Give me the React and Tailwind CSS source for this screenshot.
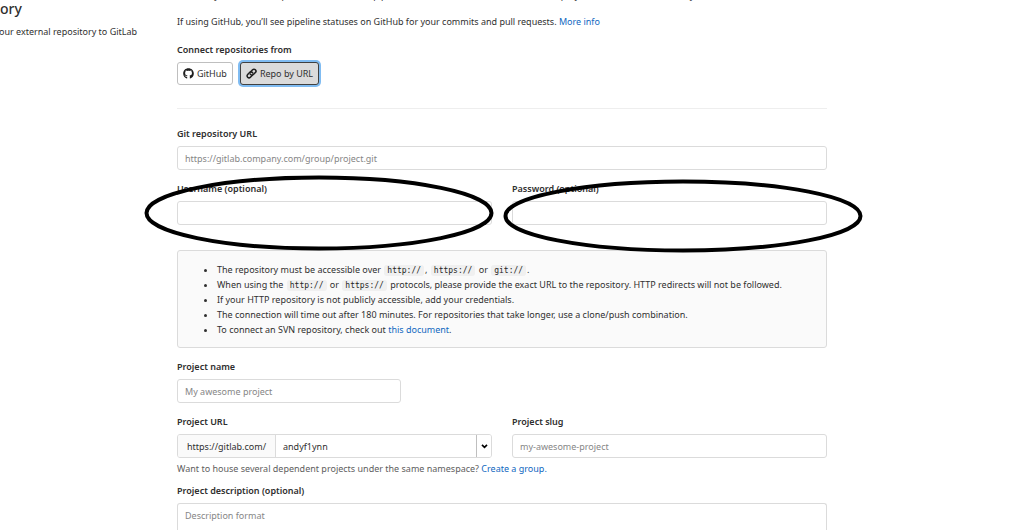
import { FaGithub } from 'react-icons/fa'

const labelClass = 'block font-semibold text-[#2e2e2e]'
const inputClass =
  'block w-full h-6 px-[7px] rounded-[3px] border border-[#dbdbdb] bg-white text-[#303030] placeholder:text-[#868686] outline-none'

function Field({ id, label, className = '', ...props }) {
  return (
    <div className={className}>
      <label htmlFor={id} className={labelClass}>{label}</label>
      <input id={id} className={`${inputClass} mt-[5px]`} {...props} />
    </div>
  )
}

function Code({ children }) {
  return (
    <code className="mx-px px-[3px] py-px rounded-[3px] bg-[#f0f0f0] font-['DejaVu_Sans_Mono',monospace] text-[8px] leading-none text-[#1f1f1f]">
      {children}
    </code>
  )
}

function LinkIcon() {
  return (
    <svg viewBox="0 0 16 16" className="w-[11px] h-[11px]" fill="none" stroke="#1f1f1f" strokeWidth="2.3" strokeLinecap="round" aria-hidden="true">
      <path d="M9.2 10.6 6.4 13.4a2.8 2.8 0 0 1-4-4l2.9-2.9a2.8 2.8 0 0 1 4 0l.5.6" />
      <path d="m6.8 5.4 2.8-2.8a2.8 2.8 0 0 1 4 4l-2.9 2.9a2.8 2.8 0 0 1-4 0l-.5-.6" />
    </svg>
  )
}

// Hand-drawn style rings around the username and password fields
function Rings() {
  return (
    <svg
      width="650"
      height="44"
      className="absolute top-0 left-0 overflow-visible pointer-events-none"
      fill="none"
      stroke="#000"
      strokeWidth="4"
      aria-hidden="true"
    >
      <ellipse cx="142" cy="32" rx="172.5" ry="35.5" />
      <ellipse cx="506" cy="35" rx="177.5" ry="34.5" />
    </svg>
  )
}

export default function App() {
  return (
    <main className="flex min-h-screen overflow-hidden bg-white font-['Noto_Sans','Open_Sans',sans-serif] text-[9px] leading-[15px] text-[#303030]">
      {/* Side column */}
      <aside className="w-[177px] shrink-0 whitespace-nowrap">
        <h4 className="text-[14px] leading-[18px] font-medium text-[#2e2e2e]">ory</h4>
        <p className="-ml-px mt-[6px]">our external repository to GitLab</p>
      </aside>

      {/* Import form */}
      <form className="flex-1 max-w-[650px]" onSubmit={(e) => e.preventDefault()}>
        <p className="-mt-[12px] whitespace-nowrap">
          Connect your external repositories, and CI/CD pipelines will run for new commits. A GitLab project will be created with only CI/CD features enabled.
        </p>
        <p className="mt-[11px]">
          If using GitHub, you’ll see pipeline statuses on GitHub for your commits and pull requests.{' '}
          <a href="#info" className="text-[#1068bf]">More info</a>
        </p>

        <p className={`${labelClass} mt-[13px]`}>Connect repositories from</p>
        <div className="flex gap-[7px] mt-[5px]">
          <button type="button" className="flex items-center gap-[3px] h-[23px] px-[5px] rounded-[3px] border border-[#bfbfbf] bg-white">
            <FaGithub className="w-[11px] h-[11px] text-[#1f1f1f]" />
            GitHub
          </button>
          <button type="button" className="flex items-center gap-[3px] h-[23px] px-[5px] rounded-[3px] border border-[#404040] bg-[#dbdbdb] ring-2 ring-[#80bcf2]">
            <LinkIcon />
            Repo by URL
          </button>
        </div>

        <hr className="mt-[23px] border-[#eeeeee]" />

        <Field id="git-url" label="Git repository URL" placeholder="https://gitlab.company.com/group/project.git" className="mt-[17px]" />

        <div className="relative grid grid-cols-2 gap-5 mt-[11px]">
          <Field id="username" label="Username (optional)" />
          <Field id="password" type="password" label="Password (optional)" />
          <Rings />
        </div>

        <div className="mt-[25px] pt-[11px] pb-[10px] rounded-[3px] border border-[#dbdbdb] bg-[#fafafa]">
          <ul className="list-disc pl-[39px]">
            <li>
              The repository must be accessible over <Code>http://</Code>, <Code>https://</Code> or <Code>git://</Code>.
            </li>
            <li>
              When using the <Code>http://</Code> or <Code>https://</Code> protocols, please provide the exact URL to the repository. HTTP redirects will not be followed.
            </li>
            <li>If your HTTP repository is not publicly accessible, add your credentials.</li>
            <li>The connection will time out after 180 minutes. For repositories that take longer, use a clone/push combination.</li>
            <li>
              To connect an SVN repository, check out <a href="#svn" className="text-[#1068bf]">this document</a>.
            </li>
          </ul>
        </div>

        <Field id="name" label="Project name" placeholder="My awesome project" className="mt-[11px] w-[224px]" />

        <div className="grid grid-cols-2 gap-5 mt-[11px]">
          <div>
            <label htmlFor="namespace" className={labelClass}>Project URL</label>
            <div className="relative flex h-6 mt-[5px] rounded-[3px] border border-[#dbdbdb] overflow-hidden">
              <span className="flex items-center justify-center w-[98px] border-r border-[#dbdbdb] bg-[#fafafa]">https://gitlab.com/</span>
              <select id="namespace" className="flex-1 appearance-none pl-[7px] bg-white outline-none">
                <option>andyf1ynn</option>
              </select>
              <span className="absolute right-0 inset-y-0 flex items-center justify-center w-[15px] border-l border-[#bfbfbf] pointer-events-none">
                <svg viewBox="0 0 8 6" className="w-[7px] h-[5px]" fill="none" stroke="#000" strokeWidth="2" aria-hidden="true">
                  <path d="m1 1 3 3 3-3" />
                </svg>
              </span>
            </div>
          </div>
          <Field id="slug" label="Project slug" placeholder="my-awesome-project" />
        </div>
        <p className="mt-[3px] text-[#5e5e5e]">
          Want to house several dependent projects under the same namespace?{' '}
          <a href="#group" className="text-[#1068bf]">Create a group.</a>
        </p>

        <label htmlFor="description" className={`${labelClass} mt-[7px]`}>Project description (optional)</label>
        <textarea
          id="description"
          placeholder="Description format"
          className="block w-full h-[27px] mt-[5px] px-[7px] pt-1 rounded-t-[3px] border border-b-0 border-[#dbdbdb] placeholder:text-[#868686] resize-none outline-none"
        />
      </form>
    </main>
  )
}
